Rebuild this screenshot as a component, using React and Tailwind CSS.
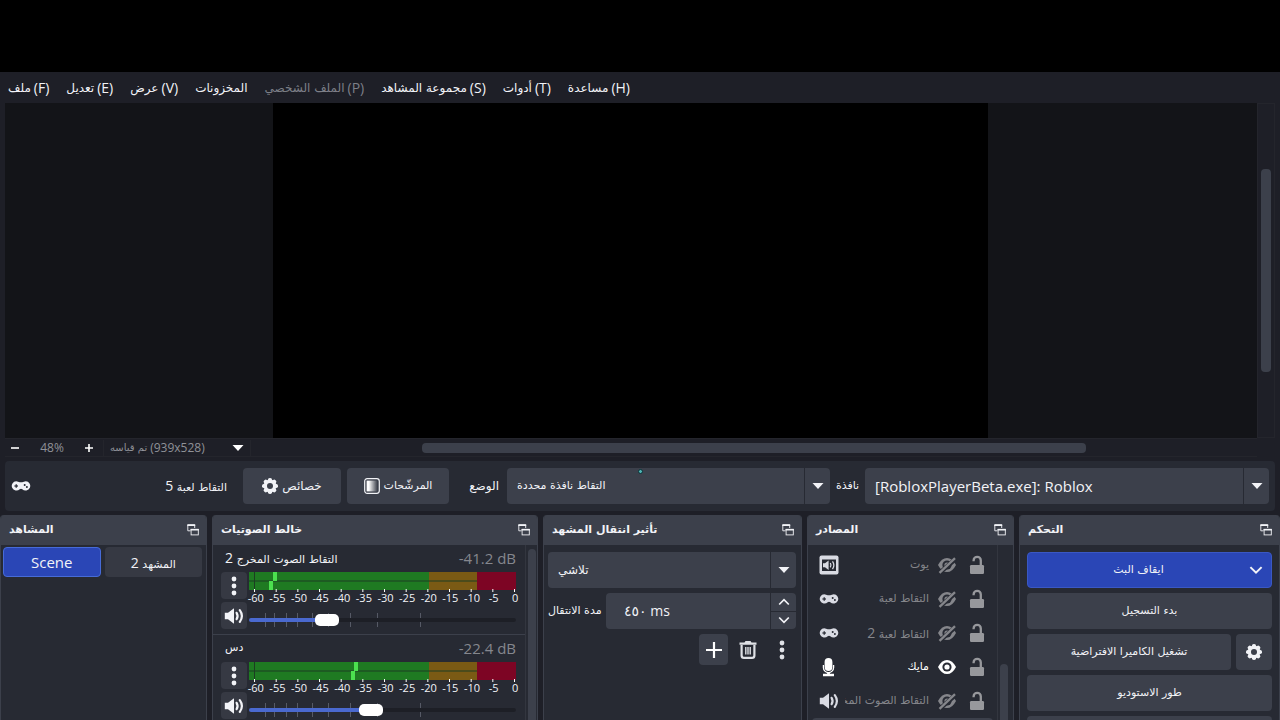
import React, { useState } from 'react';

const AR = "font-['DejaVu_Sans',sans-serif]";

/* ---------- icons ---------- */

function Gear({ hole }) {
  return (
    <svg className="size-4 shrink-0" viewBox="0 0 18 18" aria-hidden="true">
      <g fill="currentColor">
        <circle cx="9" cy="9" r="7.2" />
        {[0, 45, 90, 135].map((a) => (
          <rect key={a} x="6.7" y="0" width="4.6" height="18" rx="2" transform={`rotate(${a} 9 9)`} />
        ))}
      </g>
      <circle cx="9" cy="9" r="3.4" fill={hole} />
    </svg>
  );
}

function Gamepad({ hole = '#272a33' }) {
  return (
    <svg className="h-3 w-5 shrink-0" viewBox="0 0 20 12" aria-hidden="true">
      <path
        fill="currentColor"
        d="M5.2 1.2C6.6 1.2 7.6 2.2 8.8 2.2H11.2C12.4 2.2 13.4 1.2 14.8 1.2A4.7 4.7 0 1 1 11.3 9.3Q10 8.4 8.7 9.3A4.7 4.7 0 1 1 5.2 1.2Z"
      />
      <g fill={hole}>
        <rect x="3.4" y="5.4" width="3.6" height="1.200" />
        <rect x="4.600" y="4.200" width="1.200" height="3.600" />
        <circle cx="13.700" cy="5" r="1" />
        <circle cx="15.900" cy="7" r="1" />
      </g>
    </svg>
  );
}

function Filters() {
  return (
    <svg className="size-4 shrink-0" viewBox="0 0 16 16" aria-hidden="true">
      <defs>
        <linearGradient id="fade">
          <stop offset="0" stopColor="#fff" />
          <stop offset="0.2" stopColor="#fff" />
          <stop offset="1" stopColor="#3c404b" />
        </linearGradient>
      </defs>
      <rect x="0.7" y="0.7" width="14.6" height="14.6" rx="2.5" fill="none" stroke="currentColor" strokeWidth="1.2" />
      <rect x="2.6" y="2.6" width="10.800" height="10.800" fill="url(#fade)" />
    </svg>
  );
}

function FloatWindow() {
  return (
    <svg className="h-3 w-3 shrink-0" viewBox="0 0 12 12" aria-hidden="true">
      <g fill="none" stroke="currentColor" strokeWidth="0.9">
        <path d="M3.5 6.8H0.8V1H7.7V4" />
        <rect x="4.1" y="5.3" width="7.2" height="5.6" />
      </g>
      <path fill="currentColor" d="M0.3 0.3H8.2V2H0.3ZM3.6 4.9H11.8V6.6H3.6Z" />
    </svg>
  );
}

function Caret() {
  return (
    <svg className="h-2 w-3" viewBox="0 0 12 8" aria-hidden="true">
      <path fill="currentColor" d="M0.5 1H11.5L6 7Z" />
    </svg>
  );
}

function Chevron({ up, className = 'h-2 w-3' }) {
  return (
    <svg className={className} viewBox="0 0 12 8" aria-hidden="true">
      <path
        d={up ? 'M1.2 6.5L6 1.7L10.8 6.5' : 'M1.2 1.5L6 6.3L10.8 1.5'}
        fill="none"
        stroke="currentColor"
        strokeWidth="1.7"
      />
    </svg>
  );
}

function Dots() {
  return (
    <svg className="h-5 w-2" viewBox="0 0 8 20" fill="currentColor" aria-hidden="true">
      <circle cx="4" cy="3" r="2.4" />
      <circle cx="4" cy="10" r="2.4" />
      <circle cx="4" cy="17" r="2.4" />
    </svg>
  );
}

function Speaker() {
  return (
    <svg className="h-4 w-5 shrink-0" viewBox="0 0 20 16" aria-hidden="true">
      <path fill="currentColor" d="M0.800 4.800H4L10 0.300V15.700L4 11.200H0.800Z" />
      <g fill="none" stroke="currentColor" strokeWidth="2.200" strokeLinecap="round">
        <path d="M12.600 4.800Q14.600 8 12.600 11.200" />
        <path d="M15.800 2.200Q20 8 15.800 13.800" />
      </g>
    </svg>
  );
}

function AudioBox() {
  return (
    <svg className="h-5 w-5 shrink-0" viewBox="0 0 20 20" aria-hidden="true">
      <rect x="0.5" y="0.5" width="19" height="19" rx="2" fill="currentColor" />
      <rect x="3" y="4.5" width="14" height="11.5" fill="#272a33" />
      <path fill="currentColor" d="M4 8.3H6L9.6 5.5V15L6 12.2H4Z" />
      <g fill="none" stroke="currentColor" strokeWidth="1.3">
        <path d="M11.3 8Q12.7 10.2 11.3 12.4" />
        <path d="M13.5 6.3Q16.3 10.2 13.5 14.2" />
      </g>
    </svg>
  );
}

function Mic() {
  return (
    <svg className="h-5 w-5 shrink-0" viewBox="0 0 20 20" aria-hidden="true">
      <rect x="5.600" y="1" width="7.800" height="13" rx="3.900" fill="currentColor" />
      <path d="M4.400 8V10.500A5.100 5.100 0 0 0 14.600 10.500V8" fill="none" stroke="currentColor" strokeWidth="1.300" />
      <path fill="currentColor" d="M8.100 15H10.900V16.800H15V19.200H4V16.800H8.100Z" />
    </svg>
  );
}

function Eye({ off }) {
  return (
    <svg className="h-5 w-5 shrink-0" viewBox="0 0 20 20" aria-hidden="true">
      <path fill="currentColor" d="M1 10Q4.6 2.9 10 2.900T19 10Q15.400 17.100 10 17.100T1 10Z" />
      <circle cx="10" cy="10" r="4.600" fill="#272a33" />
      <circle cx="10" cy="10" r="2.600" fill="currentColor" />
      {off && (
        <>
          <path d="M1.500 18.800L19.500 3.200" stroke="#272a33" strokeWidth="4.400" />
          <path d="M2.500 17.800L18 3.200" stroke="currentColor" strokeWidth="2.300" />
        </>
      )}
    </svg>
  );
}

function Unlock() {
  return (
    <svg className="h-5 w-4 shrink-0" viewBox="0 0 16 20" aria-hidden="true">
      <rect x="1" y="10" width="14" height="9" rx="1.2" fill="currentColor" />
      <path d="M4.600 6.200V5.400A3.600 3.600 0 0 1 11.800 5.400V11" fill="none" stroke="currentColor" strokeWidth="2.300" />
    </svg>
  );
}

function Trash() {
  return (
    <svg className="h-5 w-5" viewBox="0 0 20 20" aria-hidden="true">
      <path fill="currentColor" d="M1.5 2.6H6.5L7.5 1H12.5L13.5 2.6H18.5V4.8H1.5Z" />
      <path d="M3.6 5V15.5Q3.6 17.9 6 17.9H14Q16.4 17.9 16.4 15.5V5" fill="none" stroke="currentColor" strokeWidth="2.2" />
      <path d="M7.800 7V14.500M10 7V14.500M12.200 7V14.500" stroke="currentColor" strokeWidth="1.400" />
    </svg>
  );
}

/* ---------- shared parts ---------- */

/* Arabic words followed, on their right, by a Latin part. */
function Pair({ ar, latin, arSize = 'text-xs', latinSize = 'text-sm' }) {
  return (
    <span className="flex items-center gap-[3px] whitespace-nowrap">
      <span dir="rtl" className={`${AR} ${arSize}`}>{ar}</span>
      {latin && <span className={latinSize}>{latin}</span>}
    </span>
  );
}

/* Arabic name with a number that reads last, at its left end. */
function Numbered({ ar, n }) {
  return (
    <span dir="rtl" className={`${AR} text-[11px] whitespace-nowrap`}>
      {ar}
      {n && <span className="font-['Open_Sans',sans-serif] text-sm"> {n}</span>}
    </span>
  );
}

function Select({ label, value, className = '', textClass }) {
  return (
    <div className={`grid h-9 grid-cols-[1fr_26px] rounded bg-[#3c404b] ${className}`}>
      <select
        aria-label={label}
        className={`col-span-2 col-start-1 row-start-1 min-w-0 appearance-none bg-transparent pr-8 pl-2.5 ${textClass}`}
      >
        <option>{value}</option>
      </select>
      <span className="pointer-events-none col-start-2 row-start-1 flex items-center justify-center border-l border-[#272a33]">
        <Caret />
      </span>
    </div>
  );
}

function Dock({ title, children }) {
  return (
    <section className="flex min-w-0 flex-col overflow-hidden rounded-t border-x border-[#3c404b] bg-[#272a33]">
      <header className="flex h-[30px] shrink-0 items-center justify-between bg-[#3c404b] pr-[7px] pl-2">
        <h2 dir="rtl" className={`${AR} text-[11px] font-bold whitespace-nowrap`}>{title}</h2>
        <button type="button" aria-label="Float">
          <FloatWindow />
        </button>
      </header>
      {children}
    </section>
  );
}

/* ---------- menu and preview ---------- */

const menus = [
  ['ملف', '(F)'],
  ['تعديل', '(E)'],
  ['عرض', '(V)'],
  ['المخزونات', null],
  ['الملف الشخصي', '(P)', true],
  ['مجموعة المشاهد', '(S)'],
  ['أدوات', '(T)'],
  ['مساعدة', '(H)'],
];

function MenuBar() {
  return (
    <nav className="flex h-[31px] shrink-0 items-center gap-[17px] px-2">
      {menus.map(([ar, latin, off]) => (
        <button key={ar} type="button" disabled={off} className={off ? 'text-[#7d7f87]' : ''}>
          <Pair ar={ar} latin={latin} />
        </button>
      ))}
    </nav>
  );
}

function Preview() {
  return (
    <div className="grid min-h-0 flex-1 grid-cols-[1fr_18px] grid-rows-[1fr_19px] pr-[5px] pl-[5px]">
      <div className="flex bg-[#131418]">
        <div className="ml-[21.4%] w-[57.1%] bg-black" />
      </div>
      <div className="flex flex-col items-center border border-[#24252c]">
        <div className="mt-[65px] h-[203px] w-2.5 rounded-sm bg-[#3c404b]" />
      </div>
      <div className="flex items-center border-y border-[#24252c] text-xs text-[#8f9197]">
        <button type="button" aria-label="Zoom out" className="flex w-5 justify-center text-white">
          <svg className="size-2.5" viewBox="0 0 10 10"><path d="M1 5H9" stroke="currentColor" strokeWidth="1.6" /></svg>
        </button>
        <span className="w-[54px] text-center">48%</span>
        <button type="button" aria-label="Zoom in" className="flex w-5 justify-center text-white">
          <svg className="size-2.5" viewBox="0 0 10 10"><path d="M1 5H9M5 1V9" stroke="currentColor" strokeWidth="1.6" /></svg>
        </button>
        <button type="button" className="ml-1 flex w-[148px] items-center justify-between border-x border-[#24252c] px-1.5">
          <Pair ar="تم قياسه" latin="(939x528)" arSize="text-[10px]" latinSize="text-xs" />
          <span className="text-white"><Caret /></span>
        </button>
        <div className="flex flex-1">
          <div className="ml-[17%] h-2.5 w-[66%] rounded-sm bg-[#3c404b]" />
        </div>
      </div>
    </div>
  );
}

function SourceToolbar() {
  return (
    <div className="relative mx-[5px] mt-1 mb-1 flex h-[50px] shrink-0 items-center rounded bg-[#272a33] px-1.5">
      <div className="flex w-[216px] items-center justify-between">
        <Gamepad />
        <Numbered ar="التقاط لعبة" n="5" />
      </div>
      <button type="button" className="ml-4 flex h-9 w-[98px] items-center justify-center gap-1 rounded bg-[#3c404b]">
        <Gear hole="#3c404b" />
        <span className={`${AR} text-xs`}>خصائص</span>
      </button>
      <button type="button" className="ml-[6px] flex h-9 w-[102px] items-center justify-center gap-1 rounded bg-[#3c404b]">
        <Filters />
        <span className={`${AR} text-[11px]`}>المرشّحات</span>
      </button>
      <span className={`${AR} w-[58px] pr-2 text-right text-xs`}>الوضع</span>
      <Select label="الوضع" value="التقاط نافذة محددة" className="min-w-0 flex-[323]" textClass={`${AR} text-[11px]`} />
      <span className={`${AR} w-[35px] text-center text-[11px]`}>نافذة</span>
      <Select
        label="نافذة"
        value="[RobloxPlayerBeta.exe]: Roblox"
        className="min-w-0 flex-[404]"
        textClass="text-[15px]"
      />
      <span className="absolute inset-x-0 top-2 mx-auto size-[5px] rounded-full border border-[#0c3238] bg-[#4fb3b3]" />
    </div>
  );
}

/* ---------- docks ---------- */

function Scenes() {
  return (
    <Dock title="المشاهد">
      <div className="grid grid-cols-2 gap-1 p-0.5 pr-1">
        <button type="button" className="h-[30px] rounded border border-[#476bd7] bg-[#2a46b6] text-[15px]">Scene</button>
        <button type="button" className="h-[30px] rounded bg-[#363943]">
          <Numbered ar="المشهد" n="2" />
        </button>
      </div>
    </Dock>
  );
}

const scale = [-60, -55, -50, -45, -40, -35, -30, -25, -20, -15, -10, -5, 0];

function Meter({ peaks }) {
  return (
    <div>
      <svg className="block h-5 w-full" viewBox="0 0 267 20" preserveAspectRatio="none" aria-hidden="true">
        <rect width="180" height="18" fill="#1f7a22" />
        <rect x="180" width="48" height="18" fill="#7a5a14" />
        <rect x="228" width="39" height="18" fill="#7d0524" />
        <path d="M0 9H228M5.5 0V18" stroke="#1c3d22" strokeWidth="1" />
        <rect x={peaks[0]} width="4" height="9" fill="#4ce04f" />
        <rect x={peaks[1]} y="9" width="4" height="9" fill="#4ce04f" />
        {scale.map((v) => (
          <rect key={v} x={265 + v * 4.333} y="17" width="1" height="3" fill="#fff" />
        ))}
      </svg>
      <div className="-mr-2.5 -ml-1 grid grid-cols-13 text-center text-[11px] leading-3">
        {scale.map((v) => <span key={v}>{v}</span>)}
      </div>
    </div>
  );
}

function Channel({ ar, n, db, peaks, level }) {
  const [value, setValue] = useState(level);
  return (
    <div className="flex h-[90px] flex-col border-b border-[#3c404b] pr-[9px] pl-2">
      <div className="flex h-[27px] shrink-0 items-center justify-between pl-1">
        <Numbered ar={ar} n={n} />
        <span className="text-[15px] text-[#85878e]">{db}</span>
      </div>
      <div className="flex gap-0.5">
        <div className="flex flex-col gap-[3px]">
          <button type="button" aria-label="Options" className="flex h-[27px] w-[26px] items-center justify-center rounded bg-[#363943]">
            <Dots />
          </button>
          <button type="button" aria-label="Mute" className="flex h-[27px] w-[26px] items-center justify-center rounded bg-[#363943]">
            <Speaker />
          </button>
        </div>
        <div className="min-w-0 flex-1">
          <Meter peaks={peaks} />
          <div className="mt-2 grid items-center">
            <svg className="col-start-1 row-start-1 h-4 w-full" viewBox="0 0 267 16" preserveAspectRatio="none" aria-hidden="true">
              <path d="M16.5 1V15M25.5 1V15M37.5 1V15M48.5 1V15M63.5 1V15M79.5 1V15M101.5 1V15M128.5 1V15M171.5 1V15" stroke="#565a66" />
            </svg>
            <input
              type="range"
              aria-label={ar}
              min="0"
              max="1000"
              value={value}
              onChange={(e) => setValue(Number(e.target.value))}
              style={{ backgroundImage: `linear-gradient(to right, #4a69cf ${value / 10}%, #1d1f26 ${value / 10}%)` }}
              className="col-start-1 row-start-1 h-1 w-full appearance-none rounded-full [&::-webkit-slider-thumb]:h-3 [&::-webkit-slider-thumb]:w-6 [&::-webkit-slider-thumb]:appearance-none [&::-webkit-slider-thumb]:rounded-[5px] [&::-webkit-slider-thumb]:bg-white"
            />
          </div>
        </div>
      </div>
    </div>
  );
}

function Mixer() {
  return (
    <Dock title="خالط الصوتيات">
      <div className="flex min-h-0 flex-1">
        <div className="min-w-0 flex-1 overflow-hidden">
          <Channel ar="التقاط الصوت المخرج" n="2" db="-41.2 dB" peaks={[24, 20]} level={272} />
          <Channel ar="دس" db="-22.4 dB" peaks={[105, 102]} level={453} />
        </div>
        <div className="w-3 border-l border-[#33363f] pt-1 pl-0.5">
          <div className="h-full w-2 rounded-t-sm bg-[#3c404b]" />
        </div>
      </div>
    </Dock>
  );
}

function Transitions() {
  return (
    <Dock title="تأثير انتقال المشهد">
      <div className="flex flex-col gap-[5px] pt-[7px] pr-[5px] pl-1">
        <Select label="تأثير انتقال المشهد" value="تلاشي" textClass={`${AR} text-xs`} />
        <div className="flex items-center">
          <label htmlFor="duration" className={`${AR} w-[58px] text-[11px] whitespace-nowrap`}>مدة الانتقال</label>
          <div className="flex h-9 min-w-0 flex-1 rounded bg-[#3c404b]">
            <input id="duration" defaultValue="٤٥٠ ms" className="min-w-0 flex-1 bg-transparent pl-[18px] text-sm" />
            <div className="flex w-[26px] flex-col divide-y divide-[#272a33] border-l border-[#272a33]">
              <button type="button" aria-label="Increase" className="flex flex-1 items-center justify-center"><Chevron up /></button>
              <button type="button" aria-label="Decrease" className="flex flex-1 items-center justify-center"><Chevron /></button>
            </div>
          </div>
        </div>
        <div className="flex justify-end gap-[5px] text-[#dfe1e6]">
          <button type="button" aria-label="Add" className="flex h-[31px] w-[29px] items-center justify-center rounded bg-[#3c404b] text-white">
            <svg className="size-4" viewBox="0 0 16 16"><path d="M0 8H16M8 0V16" stroke="currentColor" strokeWidth="2.2" /></svg>
          </button>
          <button type="button" aria-label="Remove" className="flex h-[31px] w-[29px] items-center justify-center"><Trash /></button>
          <button type="button" aria-label="More" className="flex h-[31px] w-[29px] items-center justify-center"><Dots /></button>
        </div>
      </div>
    </Dock>
  );
}

const sources = [
  { icon: AudioBox, ar: 'يوت' },
  { icon: Gamepad, ar: 'التقاط لعبة' },
  { icon: Gamepad, ar: 'التقاط لعبة', n: '2' },
  { icon: Mic, ar: 'مايك', on: true },
  { icon: Speaker, ar: 'التقاط الصوت المخرج' },
];

function Sources() {
  return (
    <Dock title="المصادر">
      <div className="flex min-h-0 flex-1 overflow-hidden">
        <ul className="min-w-0 flex-1 pt-[3px]">
          {sources.map(({ icon: Icon, ar, n, on }, i) => (
            <li key={i} className={`flex h-[34px] items-center pr-3 pl-[11px] ${on ? 'text-white' : 'text-[#85868b]'}`}>
              <span className={on ? 'text-white' : 'text-[#d9dbe3]'}><Icon /></span>
              <span dir="rtl" className="ml-1.5 flex min-w-0 flex-1 overflow-hidden"><Numbered ar={ar} n={n} /></span>
              <button type="button" aria-label="Visibility" className="ml-2"><Eye off={!on} /></button>
              <button type="button" aria-label="Lock" className="ml-3 text-[#97989c]"><Unlock /></button>
            </li>
          ))}
          <li className="mx-1 h-4 rounded-t bg-[#3c404b]" />
        </ul>
        <div className="flex w-[16px] flex-col justify-end border-l border-[#33363f] pl-0.5">
          <div className="h-14 w-2 rounded-t-sm bg-[#3c404b]" />
        </div>
      </div>
    </Dock>
  );
}

function Controls() {
  const plain = `${AR} h-9 shrink-0 rounded bg-[#3c404b] text-[11px]`;
  return (
    <Dock title="التحكم">
      <div className="flex flex-col gap-[5px] px-[7px] pt-[7px]">
        <button type="button" className={`${AR} flex h-9 shrink-0 items-center rounded border border-[#3a58c4] bg-[#2a46b6] pr-2 text-[11px]`}>
          <span className="flex-1 text-center">ايقاف البث</span>
          <Chevron className="h-2.5 w-3.5" />
        </button>
        <button type="button" className={plain}>بدء التسجيل</button>
        <div className="flex gap-[5px]">
          <button type="button" className={`${plain} flex-1`}>تشغيل الكاميرا الافتراضية</button>
          <button type="button" aria-label="Settings" className="flex h-9 w-9 items-center justify-center rounded bg-[#3c404b]">
            <Gear hole="#3c404b" />
          </button>
        </div>
        <button type="button" className={plain}>طور الاستوديو</button>
        <button type="button" aria-label="Settings" className={plain} />
      </div>
    </Dock>
  );
}

export default function App() {
  return (
    <div className="h-screen bg-black pt-[72px] font-['Open_Sans','DejaVu_Sans',sans-serif] text-[#f2f3f7]">
      <main className="flex h-full flex-col overflow-hidden bg-[#1e1f27]">
        <MenuBar />
        <Preview />
        <SourceToolbar />
        <div className="grid h-[205px] shrink-0 grid-cols-[207fr_326fr_259fr_207fr_261fr] gap-[5px] overflow-hidden">
          <Scenes />
          <Mixer />
          <Transitions />
          <Sources />
          <Controls />
        </div>
      </main>
    </div>
  );
}
